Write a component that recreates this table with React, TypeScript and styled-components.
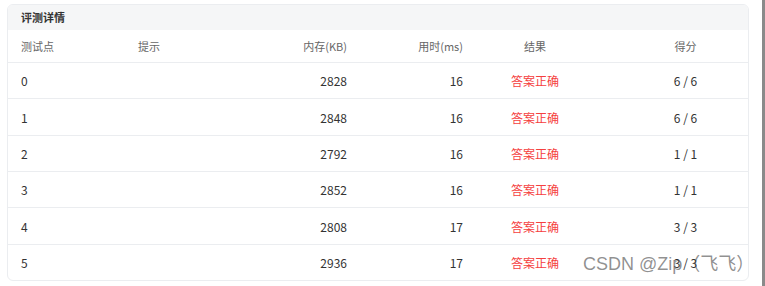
import styled, { createGlobalStyle } from "styled-components";

const GlobalStyle = createGlobalStyle`
  html, body {
    margin: 0;
    padding: 0;
    background: #fff;
  }
  body {
    font-family: "Noto Sans CJK SC", "Noto Sans", sans-serif;
  }
`;

type Result = {
  id: number;
  memory: number;
  time: number;
  score: string;
};

const results: Result[] = [
  { id: 0, memory: 2828, time: 16, score: "6 / 6" },
  { id: 1, memory: 2848, time: 16, score: "6 / 6" },
  { id: 2, memory: 2792, time: 16, score: "1 / 1" },
  { id: 3, memory: 2852, time: 16, score: "1 / 1" },
  { id: 4, memory: 2808, time: 17, score: "3 / 3" },
  { id: 5, memory: 2936, time: 17, score: "3 / 3" }
];

const App = () => {
  return (
    <>
      <GlobalStyle />
      <Page>
        <Card>
          <CardTitle>评测详情</CardTitle>
          <HeadRow>
            <Cell>测试点</Cell>
            <Cell>提示</Cell>
            <Cell $align="right">内存(KB)</Cell>
            <Cell $align="right">用时(ms)</Cell>
            <Cell $align="center">结果</Cell>
            <Cell $align="center" $pad>
              得分
            </Cell>
          </HeadRow>
          {results.map((r) => (
            <Row key={r.id}>
              <Cell>{r.id}</Cell>
              <Cell />
              <Cell $align="right">{r.memory}</Cell>
              <Cell $align="right">{r.time}</Cell>
              <Verdict>答案正确</Verdict>
              <Cell $align="center" $pad>
                {r.score}
              </Cell>
            </Row>
          ))}
        </Card>
        <EdgeBar />
        <Watermark>CSDN @Zip（飞飞）</Watermark>
      </Page>
    </>
  );
};

export default App;

const Page = styled.div`
  position: relative;
  display: flex;
  align-items: flex-start;
  width: 765px;
  height: 286px;
  padding: 4px 0 0 7px;
  box-sizing: border-box;
  overflow: hidden;
`;

const Card = styled.div`
  width: 742px;
  border: 1px solid #ebedf0;
  border-radius: 6px;
  overflow: hidden;
  box-sizing: border-box;
`;

const CardTitle = styled.div`
  height: 25px;
  line-height: 25px;
  padding-left: 13px;
  background: #f5f6f7;
  font-size: 11px;
  font-weight: 700;
  color: #333;
`;

const HeadRow = styled.div`
  display: grid;
  grid-template-columns: 117px 112px 97px 116px 144px 1fr;
  align-items: center;
  height: 32px;
  padding-left: 13px;
  border-bottom: 1px solid #ebedf0;
  font-size: 11px;
  color: #666;
`;

const Row = styled(HeadRow)`
  height: 35.35px;
  font-size: 12px;
  color: #333;

  &:last-child {
    border-bottom: none;
  }
`;

const Cell = styled.div<{ $align?: "left" | "right" | "center"; $pad?: boolean }>`
  text-align: ${(p) => p.$align ?? "left"};
  padding-left: ${(p) => (p.$pad ? "16px" : "0")};
  white-space: nowrap;
`;

const Verdict = styled.div`
  text-align: center;
  color: #f5403e;
`;

const EdgeBar = styled.div`
  width: 3px;
  height: 286px;
  margin-top: -4px;
  margin-left: auto;
  background: #8a8a8a;
`;

const Watermark = styled.div`
  position: absolute;
  left: 583px;
  top: 253px;
  font-family: "Liberation Sans", "Noto Sans CJK SC", sans-serif;
  font-size: 18px;
  line-height: 22px;
  color: rgba(70, 70, 70, 0.6);
  white-space: nowrap;
  pointer-events: none;
`;
